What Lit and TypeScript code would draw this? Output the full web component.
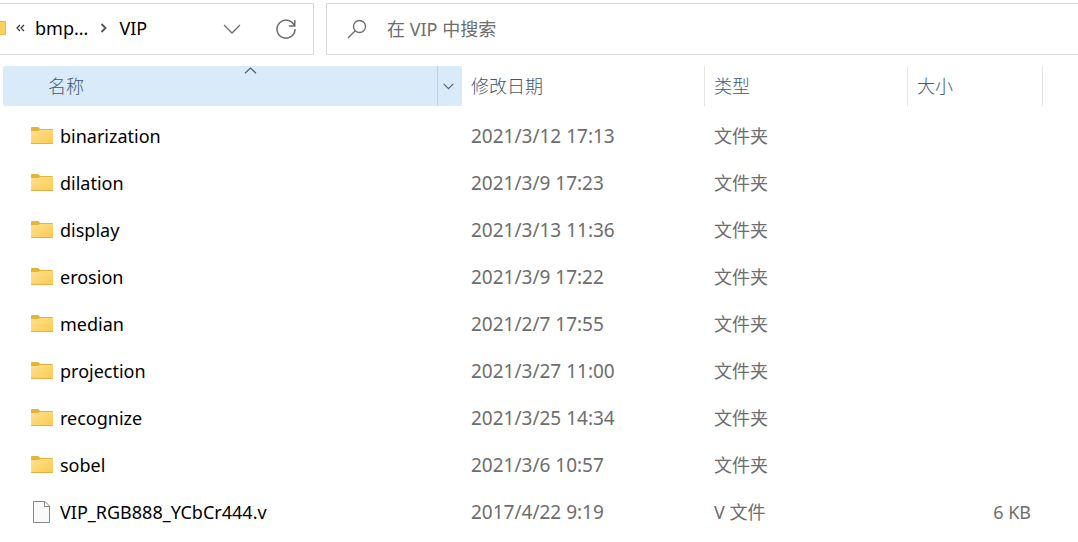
import { LitElement, html, css, svg, nothing } from "lit";
import { customElement, property, state } from "lit/decorators.js";

interface Entry {
  name: string;
  modified: string;
  type: string;
  size?: string;
  kind: "folder" | "file";
}

const ENTRIES: Entry[] = [
  { name: "binarization", modified: "2021/3/12 17:13", type: "文件夹", kind: "folder" },
  { name: "dilation", modified: "2021/3/9 17:23", type: "文件夹", kind: "folder" },
  { name: "display", modified: "2021/3/13 11:36", type: "文件夹", kind: "folder" },
  { name: "erosion", modified: "2021/3/9 17:22", type: "文件夹", kind: "folder" },
  { name: "median", modified: "2021/2/7 17:55", type: "文件夹", kind: "folder" },
  { name: "projection", modified: "2021/3/27 11:00", type: "文件夹", kind: "folder" },
  { name: "recognize", modified: "2021/3/25 14:34", type: "文件夹", kind: "folder" },
  { name: "sobel", modified: "2021/3/6 10:57", type: "文件夹", kind: "folder" },
  { name: "VIP_RGB888_YCbCr444.v", modified: "2017/4/22 9:19", type: "V 文件", size: "6 KB", kind: "file" },
];

const controls = css`
  :host {
    box-sizing: border-box;
  }
  button,
  input {
    font: inherit;
    color: inherit;
    background: none;
    border: 0;
    padding: 0;
    margin: 0;
  }
  svg {
    display: block;
    flex: none;
  }
`;

@customElement("entry-icon")
export class EntryIcon extends LitElement {
  @property() kind: "folder" | "file" = "folder";

  static styles = css`
    :host {
      display: block;
      flex: none;
      width: 24px;
      height: 24px;
    }
    svg {
      display: block;
    }
  `;

  render() {
    return html`<svg width="24" height="24" viewBox="0 0 24 24" aria-hidden="true">
      ${this.kind === "folder"
        ? svg`
          <defs>
            <linearGradient id="front" x1="0" y1="0" x2="1" y2="1">
              <stop offset="0" stop-color="#ffe08f" />
              <stop offset="1" stop-color="#fccb50" />
            </linearGradient>
          </defs>
          <path d="M1 4q0-1 1-1h6q.6 0 1 .6L10 5h12q1 0 1 1v2H1z" fill="#e6b33a" />
          <path d="M1 7h7.500l1.300-1H23v13.200q0 .8-.8.8H1.800q-.8 0-.8-.8z" fill="url(#front)" />
          <path d="M1 19.500h22" stroke="#e3b14a" stroke-width="1" />`
        : svg`
          <path d="M3.500 1.500h11.500l4.500 4.500v16.500h-16z" fill="#fafafa" stroke="#858585" />
          <path d="M14.500 1.500v5h5" fill="none" stroke="#858585" />`}
    </svg>`;
  }
}

@customElement("address-bar")
export class AddressBar extends LitElement {
  static styles = [
    controls,
    css`
      :host {
        display: flex;
        align-items: center;
        height: 52px;
        border: 1px solid #d9d9d9;
        border-left: 0;
        padding-right: 16px;
        color: #000;
      }
      .crumbs {
        display: flex;
        align-items: center;
        flex: 1;
        min-width: 0;
        padding-bottom: 2px;
      }
      .more {
        margin: 0 10px;
      }
      .sep {
        margin: 0 12px;
      }
      .tool {
        margin-left: 34px;
      }
    `,
  ];

  render() {
    return html`
      <nav class="crumbs" aria-label="地址">
        <svg width="6" height="16" viewBox="0 0 6 16" aria-hidden="true">
          <path d="M0 1h5q1 0 1 1v12q0 1-1 1H0z" fill="#fdd05c" />
          <path d="M0 1.500h5.500v13H0" fill="none" stroke="#e9b944" />
        </svg>
        <button class="more" aria-label="上级文件夹">
          <svg width="9" height="8" viewBox="0 0 9 8" fill="none" stroke="#333" stroke-width="1.200">
            <path d="M4 1L1 4l3 3M8 1L5 4l3 3" />
          </svg>
        </button>
        <button>bmp...</button>
        <svg class="sep" width="7" height="10" viewBox="0 0 7 10" fill="none" stroke="#555" stroke-width="1.800" aria-hidden="true">
          <path d="M1.500 1l4 4-4 4" />
        </svg>
        <button>VIP</button>
      </nav>
      <button class="tool" aria-label="以前的位置">
        <svg width="18" height="10" viewBox="0 0 18 10" fill="none" stroke="#6d6d6d" stroke-width="1.300">
          <path d="M1 1l8 8 8-8" />
        </svg>
      </button>
      <button class="tool" aria-label="刷新">
        <svg width="22" height="22" viewBox="0 0 22 22" fill="none" stroke="#6d6d6d" stroke-width="1.500">
          <path d="M19.600 8.500A9 9 0 1 0 20 11M19.800 2v6h-6" />
        </svg>
      </button>
    `;
  }
}

@customElement("search-box")
export class SearchBox extends LitElement {
  static styles = [
    controls,
    css`
      :host {
        display: flex;
        height: 52px;
        border: 1px solid #d9d9d9;
        border-right: 0;
        color: #666;
      }
      .field {
        display: flex;
        align-items: center;
        gap: 20px;
        flex: 1;
        min-width: 0;
        padding-left: 20px;
      }
      .input {
        flex: 1;
        min-width: 0;
        height: 24px;
        outline: none;
      }
      .input::placeholder {
        color: #6d6d6d;
        opacity: 1;
      }
    `,
  ];

  render() {
    return html`
      <label class="field">
        <svg width="20" height="20" viewBox="0 0 20 20" fill="none" stroke="#6d6d6d" stroke-width="1.300" aria-hidden="true">
          <circle cx="12.500" cy="7.500" r="6" />
          <path d="M8.200 11.800L1 19" />
        </svg>
        <input class="input" type="text" placeholder="在 VIP 中搜索" aria-label="在 VIP 中搜索" />
      </label>
    `;
  }
}

@customElement("file-list")
export class FileList extends LitElement {
  @property({ attribute: false }) entries: Entry[] = [];
  @state() private ascending = true;

  static styles = [
    controls,
    css`
      :host {
        display: block;
      }
      .table {
        width: 100%;
        table-layout: fixed;
        border-collapse: separate;
        border-spacing: 0;
        color: #6d6d6d;
      }
      .name-col {
        width: 459px;
      }
      .date-col {
        width: 243px;
      }
      .type-col {
        width: 203px;
      }
      .size-col {
        width: 135px;
      }
      .head {
        height: 40px;
        padding: 0;
        font-weight: 300;
        text-align: left;
        color: #43566f;
        border-right: 1px solid #e5e5e5;
        box-sizing: border-box;
      }
      .head.sorted {
        position: relative;
        background: #d9ebf9;
        border-right: 0;
        border-radius: 2px;
      }
      .head.rest {
        border-right: 0;
      }
      .split {
        display: flex;
        height: 40px;
      }
      .sort {
        flex: 1;
        height: 40px;
        padding-left: 9px;
        text-align: left;
      }
      .sorted .sort {
        padding-left: 45px;
      }
      .drop {
        display: flex;
        align-items: center;
        width: 25px;
        padding-left: 5px;
        border-left: 1px solid #bdd3e4;
        box-sizing: border-box;
      }
      .mark {
        position: absolute;
        top: 1px;
        left: calc(50% + 11px);
      }
      .mark.down {
        transform: scaleY(-1);
      }
      .gap {
        height: 6px;
        padding: 0;
      }
      .cell {
        height: 47px;
        padding: 0 9px;
        white-space: nowrap;
      }
      .name {
        padding-left: 27px;
        color: #000;
      }
      .label {
        display: flex;
        align-items: center;
        gap: 6px;
      }
      .date {
        font-size: 19px;
      }
      .size {
        padding-right: 12px;
        text-align: right;
      }
    `,
  ];

  private toggle() {
    this.ascending = !this.ascending;
  }

  render() {
    const rows = this.ascending ? this.entries : [...this.entries].reverse();
    return html`
      <table class="table">
        <colgroup>
          <col class="name-col" />
          <col class="date-col" />
          <col class="type-col" />
          <col class="size-col" />
          <col />
        </colgroup>
        <thead>
          <tr>
            <th class="head sorted" scope="col" aria-sort=${this.ascending ? "ascending" : "descending"}>
              <div class="split">
                <button class="sort" @click=${this.toggle}>名称</button>
                <button class="drop" aria-label="筛选">
                  <svg width="11" height="7" viewBox="0 0 11 7" fill="none" stroke="#4c607a" stroke-width="1.200">
                    <path d="M.7.8l4.800 4.800L10.300.8" />
                  </svg>
                </button>
              </div>
              <svg class="mark ${this.ascending ? "" : "down"}" width="13" height="7" viewBox="0 0 13 7" fill="none" stroke="#4c5f73" stroke-width="1.200" aria-hidden="true">
                <path d="M1 6.200L6.500 1 12 6.200" />
              </svg>
            </th>
            <th class="head" scope="col"><button class="sort">修改日期</button></th>
            <th class="head" scope="col"><button class="sort">类型</button></th>
            <th class="head" scope="col"><button class="sort">大小</button></th>
            <td class="head rest"></td>
          </tr>
        </thead>
        <tbody>
          <tr><td class="gap" colspan="5"></td></tr>
          ${rows.map(
            (e) => html`<tr>
              <td class="cell name">
                <div class="label"><entry-icon .kind=${e.kind}></entry-icon><span>${e.name}</span></div>
              </td>
              <td class="cell date">${e.modified}</td>
              <td class="cell">${e.type}</td>
              <td class="cell size">${e.size ?? nothing}</td>
              <td></td>
            </tr>`
          )}
        </tbody>
      </table>
    `;
  }
}

@customElement("app-root")
export class AppRoot extends LitElement {
  static styles = css`
    :host {
      display: block;
      min-height: 100vh;
      box-sizing: border-box;
      padding-top: 3px;
      background: #fff;
      font-family: "Noto Sans", "Noto Sans CJK SC", sans-serif;
      font-size: 18px;
      line-height: 24px;
    }
    .bar {
      display: grid;
      grid-template-columns: 314px 1fr;
      gap: 12px;
    }
    .list {
      margin: 11px 0 0 3px;
    }
  `;

  render() {
    return html`
      <header class="bar">
        <address-bar></address-bar>
        <search-box></search-box>
      </header>
      <main>
        <file-list class="list" .entries=${ENTRIES}></file-list>
      </main>
    `;
  }
}
